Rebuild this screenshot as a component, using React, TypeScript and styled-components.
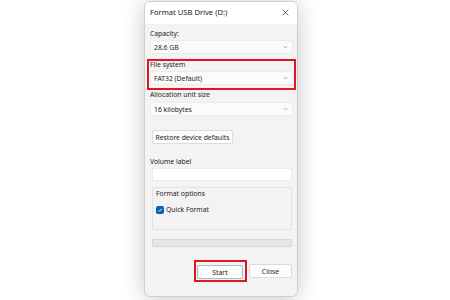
import styled, { createGlobalStyle } from "styled-components";

const GlobalStyle = createGlobalStyle`
  html, body {
    margin: 0;
    padding: 0;
    background: #ffffff;
  }
  body {
    font-family: "Noto Sans", "Open Sans", sans-serif;
    color: #1b1b1b;
  }
`;

const Page = styled.div`
  width: 450px;
  height: 300px;
  display: flex;
  align-items: flex-start;
  padding: 1px 0 0 144px;
  box-sizing: border-box;
  overflow: hidden;
`;

const Dialog = styled.div`
  width: 154px;
  height: 296px;
  box-sizing: border-box;
  border: 1px solid #cfcfcf;
  border-radius: 6px;
  background: #f3f3f3;
  box-shadow: 0 2px 22px rgba(0, 0, 0, 0.22);
  display: flex;
  flex-direction: column;
  overflow: hidden;
`;

const TitleBar = styled.div`
  height: 22px;
  flex: none;
  background: #ffffff;
  display: flex;
  align-items: center;
  justify-content: space-between;
  padding: 0 8px 2px 5px;
  box-sizing: border-box;
  font-size: 7.6px;
  color: #202020;
`;

const CloseIcon = styled.svg`
  width: 7px;
  height: 7px;
`;

const Body = styled.div`
  flex: 1;
  display: flex;
  flex-direction: column;
  padding: 5px 4px 0 5px;
`;

const Label = styled.div<{ $top?: number; $line?: number }>`
  font-size: 6.8px;
  line-height: ${(p) => p.$line ?? 10}px;
  margin-top: ${(p) => p.$top ?? 0}px;
  color: #1b1b1b;
`;

const Select = styled.div<{ $top?: number }>`
  height: 14px;
  flex: none;
  margin-top: ${(p) => p.$top ?? 1}px;
  box-sizing: border-box;
  background: #fbfbfb;
  border: 1px solid #ececec;
  border-radius: 2px;
  display: flex;
  align-items: center;
  justify-content: space-between;
  padding: 0 4px 0 3px;
  font-size: 6.8px;
`;

const Chevron = styled.svg`
  width: 5px;
  height: 4px;
`;

const Highlight = styled.div`
  margin: 5px -3px 0 -3px;
  border: 2px solid #e3141c;
  padding: 0 1px 3px 1px;
  display: flex;
  flex-direction: column;
`;

const Button = styled.button<{ $width: number; $focus?: boolean }>`
  width: ${(p) => p.$width}px;
  height: 14px;
  padding: 0;
  box-sizing: border-box;
  font-family: inherit;
  font-size: 6.8px;
  color: #1b1b1b;
  background: #fdfdfd;
  border: 1px solid ${(p) => (p.$focus ? "#9fbfcf" : "#dcdcdc")};
  border-radius: 2px;
`;

const RestoreRow = styled.div`
  display: flex;
  margin-top: 14px;
  padding-left: 2px;
`;

const TextInput = styled.div`
  height: 13px;
  flex: none;
  margin: 1px 1px 0 2px;
  box-sizing: border-box;
  background: #ffffff;
  border: 1px solid #ececec;
  border-radius: 2px;
`;

const Group = styled.div`
  margin: 6px 1px 0 2px;
  height: 43px;
  flex: none;
  box-sizing: border-box;
  border: 1px solid #e2e2e2;
  border-radius: 2px;
  padding: 0 3px;
  display: flex;
  flex-direction: column;
`;

const CheckRow = styled.label`
  display: flex;
  align-items: center;
  gap: 2px;
  margin-top: 6px;
  font-size: 6.8px;
`;

const CheckBox = styled.span`
  width: 8px;
  height: 8px;
  border-radius: 2px;
  background: #0a5fb4;
  display: flex;
  align-items: center;
  justify-content: center;
`;

const Progress = styled.div`
  height: 8px;
  flex: none;
  margin: 9px 1px 0 2px;
  box-sizing: border-box;
  background: #e6e6e6;
  border: 1px solid #d6d6d6;
  border-radius: 1px;
`;

const Footer = styled.div`
  display: flex;
  justify-content: flex-end;
  align-items: center;
  gap: 2px;
  margin-top: 13px;
  padding-right: 1px;
`;

const StartFrame = styled.div`
  display: flex;
  border: 2px solid #e3141c;
  padding: 3px 2px 1px 1px;
`;

const Chev = () => (
  <Chevron viewBox="0 0 10 6">
    <path d="M1 1 L5 5 L9 1" fill="none" stroke="#8a8a8a" strokeWidth="1.2" />
  </Chevron>
);

export default function App() {
  return (
    <>
      <GlobalStyle />
      <Page>
        <Dialog>
          <TitleBar>
            <span>Format USB Drive (D:)</span>
            <CloseIcon viewBox="0 0 10 10">
              <path d="M1 1 L9 9 M9 1 L1 9" stroke="#333" strokeWidth="1" />
            </CloseIcon>
          </TitleBar>
          <Body>
            <Label>Capacity:</Label>
            <Select>
              <span>28.6 GB</span>
              <Chev />
            </Select>

            <Highlight>
              <Label $line={8}>File system</Label>
              <Select $top={2}>
                <span>FAT32 (Default)</span>
                <Chev />
              </Select>
            </Highlight>

            <Label>Allocation unit size</Label>
            <Select $top={2}>
              <span>16 kilobytes</span>
              <Chev />
            </Select>

            <RestoreRow>
              <Button $width={81}>Restore device defaults</Button>
            </RestoreRow>

            <Label $top={13}>Volume label</Label>
            <TextInput />

            <Group>
              <Label $top={1}>Format options</Label>
              <CheckRow>
                <CheckBox>
                  <svg width="6" height="6" viewBox="0 0 10 10">
                    <path d="M2 5.2 L4.2 7.4 L8.2 2.8" fill="none" stroke="#fff" strokeWidth="1.4" />
                  </svg>
                </CheckBox>
                Quick Format
              </CheckRow>
            </Group>

            <Progress />

            <Footer>
              <StartFrame>
                <Button $width={46} $focus>Start</Button>
              </StartFrame>
              <Button $width={43}>Close</Button>
            </Footer>
          </Body>
        </Dialog>
      </Page>
    </>
  );
}
